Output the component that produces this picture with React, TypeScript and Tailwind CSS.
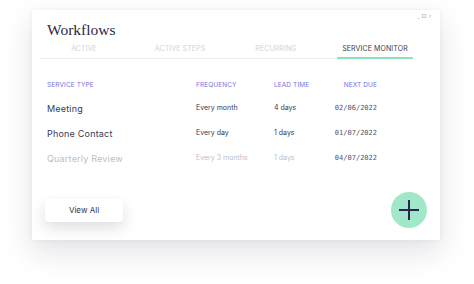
import React from "react";

const rows = [
  { name: "Meeting", freq: "Every month", lead: "4 days", due: "02/06/2022", muted: false },
  { name: "Phone Contact", freq: "Every day", lead: "1 days", due: "01/07/2022", muted: false },
  { name: "Quarterly Review", freq: "Every 3 months", lead: "1 days", due: "04/07/2022", muted: true },
];

export default function App() {
  return (
    <div className="w-[474px] h-[284px] bg-white pl-[32px] pt-[10px]" style={{ fontFamily: "Inter, 'Noto Sans', sans-serif" }}>
      <div className="relative w-[408px] h-[230px] bg-white flex flex-col shadow-[0_12px_28px_rgba(30,30,60,0.13),0_0_6px_rgba(30,30,60,0.05)]">
        <div className="absolute top-[3px] right-[8px] flex items-center gap-[2px] text-[6px] leading-none text-[#c9c9d2]">
          <span>_</span>
          <span className="inline-block w-[4px] h-[4px] border border-[#c9c9d2]"></span>
          <span>×</span>
        </div>
        <div className="pl-[15px] pt-[11px] text-[15.5px] leading-[18px] text-[#2b2946]" style={{ fontFamily: "'Liberation Serif', 'DejaVu Serif', serif" }}>
          Workflows
        </div>
        <div className="ml-[8px] w-[373px] mt-[5px] flex border-b border-[#ececf0] text-[7px] leading-[10px] tracking-[0.1px]">
          <div className="w-[88px] text-center pb-[4px] text-[#d2d2da]">ACTIVE</div>
          <div className="w-[104px] text-center pb-[4px] text-[#d2d2da]">ACTIVE STEPS</div>
          <div className="w-[88px] text-center pb-[4px] text-[#d2d2da]">RECURRING</div>
          <div className="ml-[17px] w-[76px] relative text-center pb-[4px] text-[#3b3950]">
            SERVICE MONITOR
            <div className="absolute left-0 right-0 bottom-[-1px] h-[2px] rounded-full bg-[#8ee0bd]"></div>
          </div>
        </div>
        <div className="pl-[15px] mt-[22px] grid grid-cols-[149px_78px_48px_55px] items-center text-[6.5px] leading-[8px] text-[#7b6fe0] tracking-[0.1px]">
          <div>SERVICE TYPE</div>
          <div>FREQUENCY</div>
          <div>LEAD TIME</div>
          <div className="text-right">NEXT DUE</div>
        </div>
        <div className="mt-[7px] flex flex-col">
          {rows.map((r) => (
            <div key={r.name} className={`pl-[15px] h-[25px] grid grid-cols-[149px_78px_48px_55px] items-center ${r.muted ? "text-[#bdbdc8]" : "text-[#3a384f]"}`}>
              <div className="text-[9px] tracking-[0.2px]">{r.name}</div>
              <div className="text-[7px]">{r.freq}</div>
              <div className="text-[7px]">{r.lead}</div>
              <div className="text-right text-[7px] text-[#55536a]" style={{ fontFamily: "'DejaVu Sans Mono', monospace" }}>{r.due}</div>
            </div>
          ))}
        </div>
        <div className="mt-auto px-[13px] pb-[12px] flex items-center justify-between">
          <div className="w-[78px] h-[23px] rounded-[4px] bg-white flex items-center justify-center text-[8px] text-[#34324a] shadow-[0_6px_14px_rgba(30,30,60,0.14)]">
            View All
          </div>
          <div className="w-[36px] h-[36px] rounded-full bg-[#a1e8cb] flex items-center justify-center">
            <svg width="22" height="22" viewBox="0 0 22 22">
              <path d="M11 1v20M1 11h20" stroke="#2a2450" strokeWidth="2" strokeLinecap="butt" />
            </svg>
          </div>
        </div>
      </div>
    </div>
  );
}
